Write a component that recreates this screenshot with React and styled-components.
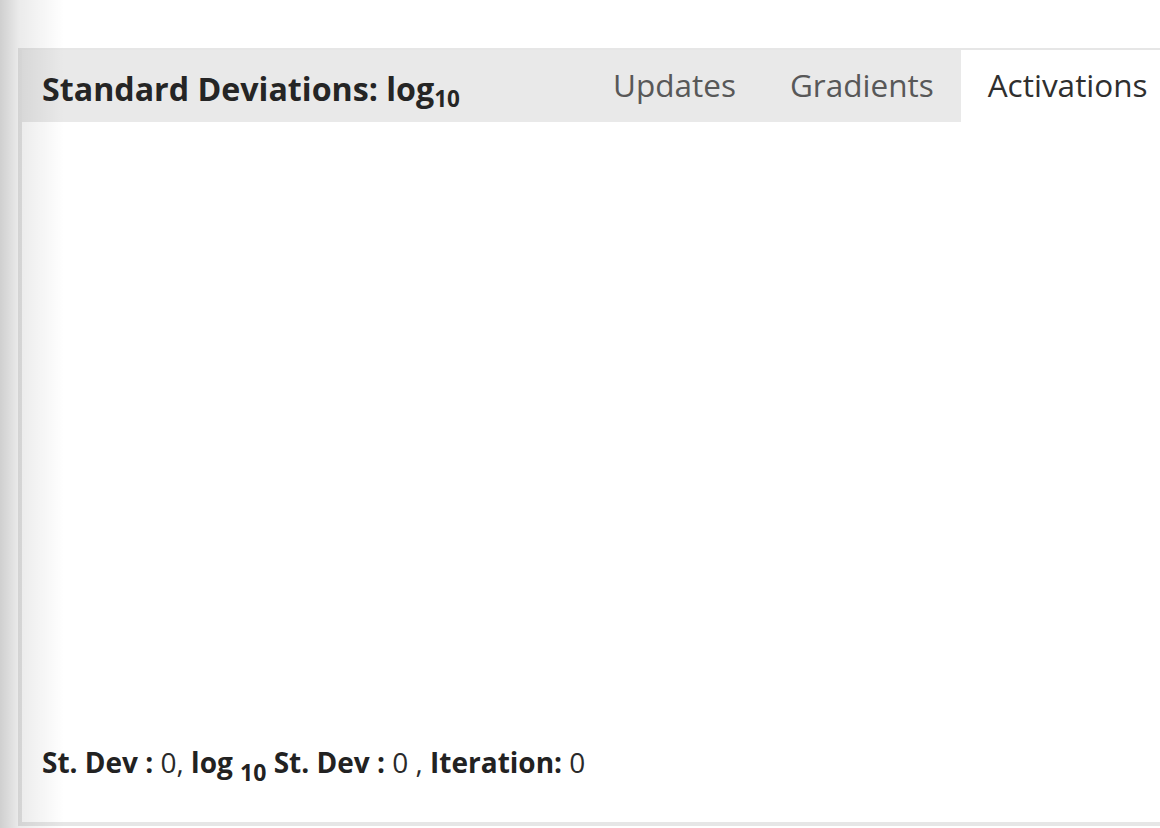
import React from 'react'
import styled, { createGlobalStyle } from 'styled-components'

const GlobalStyle = createGlobalStyle`
  html, body {
    margin: 0;
    padding: 0;
    overflow: hidden;
    background: #fff;
    font-family: "Open Sans", "Noto Sans", sans-serif;
  }
`

const tabs = ['Updates', 'Gradients', 'Activations']

function App() {
  const active = 'Activations'

  return (
    <>
      <GlobalStyle />
      <ScPage>
        <ScCard>
          <ScHeader>
            <ScTitle>
              <span>Standard Deviations: log<sub>10</sub></span>
            </ScTitle>
            <ScTabs>
              {tabs.map(t => (
                <ScTab key={t} $active={t === active}>{t}</ScTab>
              ))}
            </ScTabs>
          </ScHeader>
          <ScBody>
            <ScStats>
              <b>St. Dev :</b> 0, <b>log <sub>10</sub> St. Dev :</b> 0 , <b>Iteration:</b> 0
            </ScStats>
          </ScBody>
        </ScCard>
        <ScShade />
      </ScPage>
    </>
  )
}

const ScPage = styled.div`
  position: relative;
  width: 1160px;
  height: 828px;
  padding: 48px 0 0 18px;
  box-sizing: border-box;
  overflow: hidden;
`

const ScShade = styled.div`
  position: absolute;
  top: 0;
  left: 0;
  width: 64px;
  height: 100%;
  pointer-events: none;
  background: linear-gradient(to right, rgba(0, 0, 0, 0.19), rgba(0, 0, 0, 0.08) 30%, rgba(0, 0, 0, 0));
`

const ScCard = styled.div`
  width: 1240px;
  height: 778px;
  box-sizing: border-box;
  display: flex;
  flex-direction: column;
  border: 4px solid #e6e6e6;
  border-top-width: 2px;
  border-right: none;
  background: #fff;
`

const ScHeader = styled.div`
  display: flex;
  align-items: stretch;
  height: 72px;
  background: #e9e9e9;
`

const ScTitle = styled.h2`
  margin: 0;
  padding: 4px 20px 0;
  width: 564px;
  box-sizing: border-box;
  display: flex;
  align-items: center;
  font-size: 32.2px;
  font-weight: 700;
  color: #252525;
  white-space: nowrap;
  sub {
    font-size: 22.5px;
    vertical-align: -6px;
    line-height: 0;
  }
`

const ScTabs = styled.div`
  display: flex;
  align-items: stretch;
`

const ScTab = styled.div`
  display: flex;
  align-items: center;
  padding: 0 27px 4px;
  font-size: 31.5px;
  font-weight: 400;
  color: ${p => (p.$active ? '#2f2f2f' : '#585858')};
  background: ${p => (p.$active ? '#fff' : 'transparent')};
`

const ScBody = styled.div`
  flex: 1;
  display: flex;
  flex-direction: column;
  justify-content: flex-end;
  padding: 0 20px 41px;
`

const ScStats = styled.div`
  font-size: 28px;
  color: #2a2a2a;
  b {
    font-weight: 700;
    color: #222;
  }
  sub {
    font-size: 23px;
    vertical-align: -8px;
    line-height: 0;
  }
`

export default App
